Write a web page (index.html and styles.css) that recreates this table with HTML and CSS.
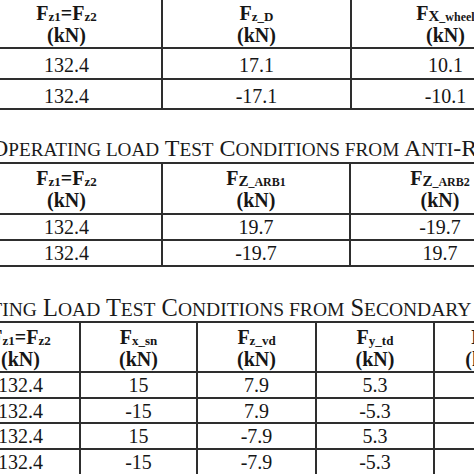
FILE: index.html
```html
<!DOCTYPE html>
<html>
<head>
<meta charset="utf-8">
<link rel="stylesheet" href="styles.css">
</head>
<body>
<div class="page">
  <div class="tbl t1">
    <div class="c h"><span>F<sub>z1</sub>=F<sub>z2</sub></span><span>(kN)</span></div>
    <div class="c h"><span>F<sub>z_D</sub></span><span>(kN)</span></div>
    <div class="c h"><span>F<sub class="up">X<small>_wheel</small></sub></span><span>(kN)</span></div>
    <div class="c d">132.4</div><div class="c d">17.1</div><div class="c d">10.1</div>
    <div class="c d">132.4</div><div class="c d">-17.1</div><div class="c d">-10.1</div>
  </div>

  <div class="title t2">O<span class="s">perating load</span> T<span class="s">est</span> C<span class="s">onditions from</span> A<span class="s">nti</span>-R<span class="s">oll</span> B<span class="s">ar</span></div>

  <div class="tbl t2tbl">
    <div class="c h"><span>F<sub>z1</sub>=F<sub>z2</sub></span><span>(kN)</span></div>
    <div class="c h"><span>F<sub class="up">Z<small>_ARB1</small></sub></span><span>(kN)</span></div>
    <div class="c h"><span>F<sub class="up">Z<small>_ARB2</small></sub></span><span>(kN)</span></div>
    <div class="c d">132.4</div><div class="c d">19.7</div><div class="c d">-19.7</div>
    <div class="c d">132.4</div><div class="c d">-19.7</div><div class="c d">19.7</div>
  </div>

  <div class="title t3">O<span class="s">perating</span> L<span class="s">oad</span> T<span class="s">est</span> C<span class="s">onditions from</span> S<span class="s">econdary</span></div>

  <div class="tbl t3tbl">
    <div class="c h"><span>F<sub>z1</sub>=F<sub>z2</sub></span><span>(kN)</span></div>
    <div class="c h"><span>F<sub>x_sn</sub></span><span>(kN)</span></div>
    <div class="c h"><span>F<sub>z_vd</sub></span><span>(kN)</span></div>
    <div class="c h"><span>F<sub>y_td</sub></span><span>(kN)</span></div>
    <div class="c h"><span>M<sub>x_td</sub></span><span>(kNm)</span></div>
    <div class="c d">132.4</div><div class="c d">15</div><div class="c d">7.9</div><div class="c d">5.3</div><div class="c d">2.1</div>
    <div class="c d">132.4</div><div class="c d">-15</div><div class="c d">7.9</div><div class="c d">-5.3</div><div class="c d">-2.1</div>
    <div class="c d">132.4</div><div class="c d">15</div><div class="c d">-7.9</div><div class="c d">5.3</div><div class="c d">2.1</div>
    <div class="c d">132.4</div><div class="c d">-15</div><div class="c d">-7.9</div><div class="c d">-5.3</div><div class="c d">-2.1</div>
  </div>
</div>
</body>
</html>
```

FILE: styles.css
```css
html, body {
  margin: 0;
  padding: 0;
  background: #fff;
}
body {
  width: 474px;
  height: 474px;
  overflow: hidden;
  font-family: "Liberation Serif", "Times New Roman", serif;
  color: #161616;
}
.page {
  width: 474px;
  display: flex;
  flex-direction: column;
}
.tbl {
  display: grid;
  border-top: 2px solid #2e2e2e;
  box-sizing: border-box;
  flex: none;
}
.c {
  box-sizing: border-box;
  border-right: 2px solid #2e2e2e;
  border-bottom: 2px solid #2e2e2e;
  text-align: center;
  font-size: 20px;
}
.h {
  display: flex;
  flex-direction: column;
  justify-content: center;
  align-items: center;
  font-weight: bold;
  line-height: 22px;
}
.h sub {
  font-size: 13px;
  vertical-align: -1px;
  line-height: 0;
}
.h sub.up {
  font-size: 15px;
}
.h sub small {
  font-size: 12px;
}
.d {
  display: flex;
  align-items: center;
  justify-content: center;
  line-height: 22px;
}

.t1 {
  margin-top: -2px;
  margin-left: -28px;
  grid-template-columns: 191px 189px 189px;
  grid-template-rows: 49px 31px 30px;
}
.t1 .d { padding-top: 3px; }

.t2tbl {
  margin-left: -28px;
  grid-template-columns: 191px 188px 180px;
  grid-template-rows: 51px 26px 26px;
}

.t3tbl {
  margin-left: -38px;
  grid-template-columns: 119px 117px 119px 118px 118px;
  grid-template-rows: 50px 26px 25px 26px 26px;
}
.t3tbl .h { padding-top: 2px; }

.title {
  white-space: nowrap;
  font-size: 24.4px;
  line-height: 27px;
  height: 27px;
  color: #1a1a1a;
}
.title .s {
  text-transform: uppercase;
  font-size: 0.8em;
}
.t2 {
  margin-top: 25px;
  margin-left: -9px;
  font-size: 24px;
}
.t3 {
  margin-top: 27px;
  margin-left: -75px;
}
```
